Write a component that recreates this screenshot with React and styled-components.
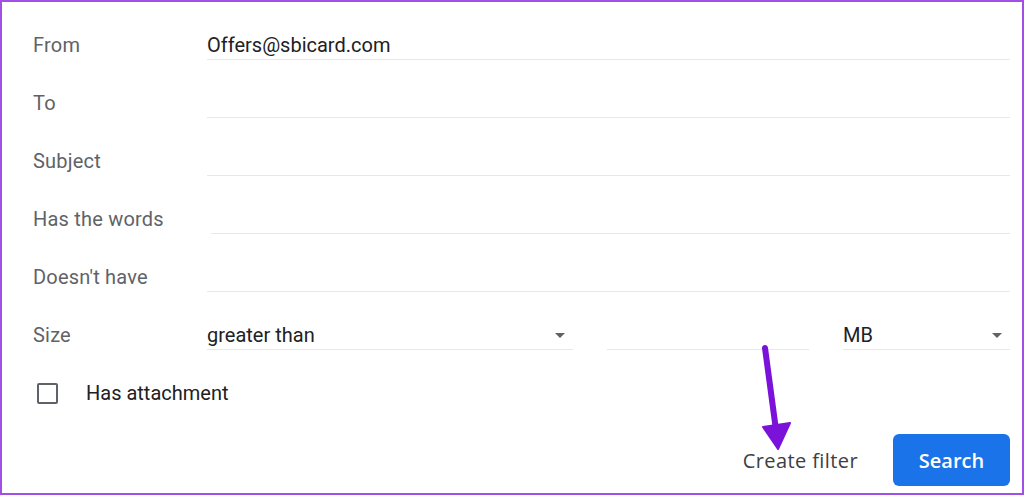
import React from 'react';
import styled, { createGlobalStyle } from 'styled-components';

const GlobalStyle = createGlobalStyle`
  html, body {
    margin: 0;
    padding: 0;
    background: #ffffff;
  }
  body {
    font-family: Roboto, "Liberation Sans", Arial, sans-serif;
  }
`;

const rows = [
  { label: 'From', value: 'Offers@sbicard.com' },
  { label: 'To', value: '' },
  { label: 'Subject', value: '' },
  { label: 'Has the words', value: '', indent: 4 },
  { label: "Doesn't have", value: '' },
];

const Frame = styled.div`
  position: relative;
  box-sizing: border-box;
  width: 1024px;
  height: 495px;
  border: 2px solid #a050e6;
  padding: 14px 12px 0 31px;
  background: #fff;
  display: flex;
  flex-direction: column;
`;

const Row = styled.div`
  display: grid;
  grid-template-columns: 174px 1fr;
  align-items: center;
  height: 58px;
`;

const Label = styled.span`
  font-size: 20px;
  color: #5f6368;
  letter-spacing: 0.2px;
`;

const Field = styled.div`
  box-sizing: border-box;
  height: 29px;
  margin-left: ${(p) => p.$indent || 0}px;
  border-bottom: 1px solid #e6e8eb;
  display: flex;
  align-items: center;
  justify-content: space-between;
  font-size: 20px;
  color: #202124;
  padding-right: 8px;
`;

const SizeFields = styled.div`
  display: grid;
  grid-template-columns: 366px 202px 1fr;
  column-gap: 34px;
`;

const Caret = styled.span`
  width: 0;
  height: 0;
  border-left: 5px solid transparent;
  border-right: 5px solid transparent;
  border-top: 5px solid #5f6368;
  margin-top: 2px;
`;

const CheckRow = styled.label`
  display: flex;
  align-items: center;
  height: 58px;
  gap: 28px;
  padding-left: 4px;
  font-size: 20px;
  color: #202124;
`;

const Box = styled.span`
  box-sizing: border-box;
  width: 21px;
  height: 21px;
  border: 2px solid #5f6368;
  border-radius: 2px;
`;

const Footer = styled.div`
  display: flex;
  justify-content: flex-end;
  align-items: center;
  gap: 35px;
  margin-top: 12px;
`;

const TextButton = styled.button`
  border: none;
  background: none;
  padding: 0;
  font-family: "Open Sans", Roboto, sans-serif;
  font-size: 20px;
  letter-spacing: 0.4px;
  color: #3c4043;
`;

const PrimaryButton = styled.button`
  width: 117px;
  height: 52px;
  border: none;
  border-radius: 6px;
  background: #1a73e8;
  color: #fff;
  font-family: "Open Sans", Roboto, sans-serif;
  font-weight: 600;
  font-size: 20px;
`;

const Arrow = styled.svg`
  position: absolute;
  left: 755px;
  top: 340px;
  pointer-events: none;
`;

export default function App() {
  return (
    <>
      <GlobalStyle />
      <Frame>
        {rows.map((r) => (
          <Row key={r.label}>
            <Label>{r.label}</Label>
            <Field $indent={r.indent}>{r.value}</Field>
          </Row>
        ))}
        <Row>
          <Label>Size</Label>
          <SizeFields>
            <Field>
              greater than
              <Caret />
            </Field>
            <Field />
            <Field>
              MB
              <Caret />
            </Field>
          </SizeFields>
        </Row>
        <CheckRow>
          <Box />
          Has attachment
        </CheckRow>
        <Footer>
          <TextButton>Create filter</TextButton>
          <PrimaryButton>Search</PrimaryButton>
        </Footer>
        <Arrow width="40" height="112" viewBox="0 0 40 112">
          <line x1="8" y1="6" x2="19" y2="88" stroke="#7b12da" strokeWidth="6" strokeLinecap="round" />
          <polygon points="6,85 33,81 21,107" fill="#7b12da" stroke="#7b12da" strokeWidth="2" strokeLinejoin="round" />
        </Arrow>
      </Frame>
    </>
  );
}
